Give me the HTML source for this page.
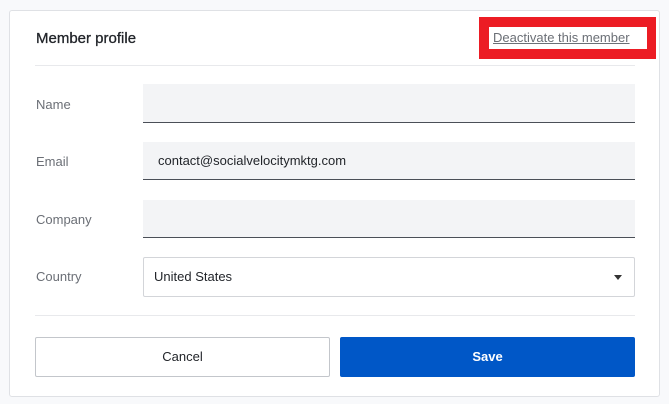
<!DOCTYPE html><html><head><style>
*{box-sizing:border-box;margin:0;padding:0}
body{width:669px;height:404px;background:#f8f9fb;font-family:"Liberation Sans",sans-serif;position:relative;overflow:hidden}
.card{position:absolute;left:9px;top:10px;width:651px;height:387px;background:#fff;border:1px solid #dfe1e5;border-radius:3px}
.a{position:absolute}
.lbl{position:absolute;left:36px;font-size:13px;color:#6b6f76}
.inp{position:absolute;left:143px;width:492px;background:#f3f4f6;border-bottom:1px solid #4a4f57;font-size:13px;color:#22252a;padding-left:15px;display:flex;align-items:center}
</style></head><body>
<div class="card"></div>
<div class="a" style="left:36px;top:30px;font-size:15px;color:#22252a;-webkit-text-stroke:0.3px #22252a">Member profile</div>
<div class="a" style="left:479px;top:17px;width:177px;height:42px;background:#ec1c24"></div>
<div class="a" style="left:489px;top:27px;width:158px;height:22px;background:#fff"></div>
<div class="a" style="left:493px;top:30px;font-size:13px;color:#6b6f76;text-decoration:underline">Deactivate this member</div>
<div class="a" style="left:35px;top:65px;width:600px;height:1px;background:#e8e9ec"></div>
<div class="lbl" style="top:97px">Name</div>
<div class="inp" style="top:84px;height:39px"></div>
<div class="lbl" style="top:154px">Email</div>
<div class="inp" style="top:142px;height:38px">contact@socialvelocitymktg.com</div>
<div class="lbl" style="top:212px">Company</div>
<div class="inp" style="top:200px;height:38px"></div>
<div class="lbl" style="top:269px">Country</div>
<div class="a" style="left:143px;top:257px;width:492px;height:40px;border:1px solid #d3d5d9;border-radius:2px;font-size:13px;color:#22252a;padding:11px 0 0 10px">United States<span style="position:absolute;right:12px;top:17px;border-left:4px solid transparent;border-right:4px solid transparent;border-top:5px solid #333"></span></div>
<div class="a" style="left:35px;top:315px;width:600px;height:1px;background:#e8e9ec"></div>
<div class="a" style="left:35px;top:337px;width:295px;height:40px;border:1px solid #c3c6cb;border-radius:2px;font-size:13px;color:#22252a;text-align:center;line-height:38px">Cancel</div>
<div class="a" style="left:340px;top:337px;width:295px;height:40px;background:#0057c7;border-radius:2px;font-size:13px;font-weight:bold;color:#fff;text-align:center;line-height:40px">Save</div>
</body></html>
